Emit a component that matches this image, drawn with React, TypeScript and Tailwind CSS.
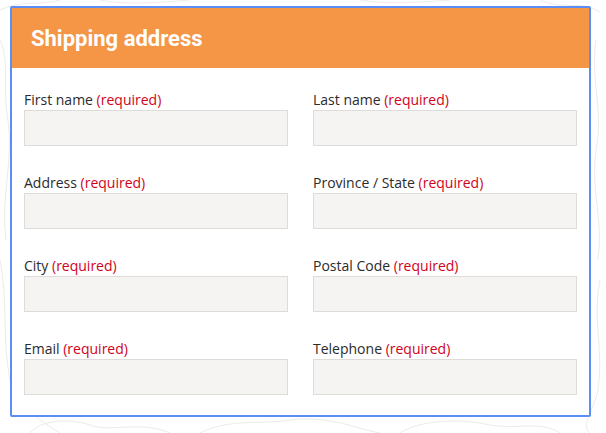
const FIELDS: [string, string][] = [
  ["First name", "Last name"],
  ["Address", "Province / State"],
  ["City", "Postal Code"],
  ["Email", "Telephone"],
];

function Field({ label }: { label: string }) {
  return (
    <div className="flex flex-col">
      <label className="h-5 text-[14px] leading-5 text-[#2b2b2b]">
        {label} <span className="text-[#d0021b]">(required)</span>
      </label>
      <input className="h-9 w-full border border-[#dedcd9] bg-[#f5f4f2] outline-none" />
    </div>
  );
}

function Topo() {
  return (
    <svg className="absolute inset-0 h-full w-full" viewBox="0 0 606 433" fill="none" stroke="#ecebe8" strokeWidth="1">
      <path d="M0 40 C10 60 2 90 8 120 C14 160 0 200 6 240" />
      <path d="M0 260 C8 300 2 340 10 380 C20 410 40 420 60 433" />
      <path d="M30 433 C40 420 70 418 90 425 C110 433 140 420 170 433" />
      <path d="M200 433 C230 418 260 425 290 420 C330 415 360 430 380 433" />
      <path d="M400 433 C420 420 460 418 490 425 C520 430 540 420 560 433" />
      <path d="M540 0 C560 10 580 0 600 12" />
      <path d="M596 40 C590 80 604 110 596 150 C590 190 604 220 598 260" />
      <path d="M600 280 C592 320 604 350 598 390 C594 410 580 425 590 433" />
      <path d="M0 10 C20 0 40 6 60 0" />
      <path d="M100 0 C130 6 160 2 190 0" />
      <path d="M360 0 C390 5 420 2 450 0" />
    </svg>
  );
}

export default function App() {
  return (
    <div className="relative h-[433px] w-[606px] overflow-hidden bg-white font-['Open_Sans','Noto_Sans',sans-serif]">
      <Topo />
      <div className="relative ml-[10px] mt-[6px] w-[581px] rounded-[2px] border-2 border-[#5a8ef4] bg-white">
        <div className="flex h-[60px] items-center bg-[#f49646] pl-[19px]">
          <h2 className="font-['Roboto',sans-serif] text-[22px] font-bold text-white">Shipping address</h2>
        </div>
        <div className="grid grid-cols-2 gap-x-[25px] gap-y-[27px] px-3 pb-5 pt-[22px]">
          {FIELDS.flat().map(l => (
            <Field key={l} label={l} />
          ))}
        </div>
      </div>
    </div>
  );
}
